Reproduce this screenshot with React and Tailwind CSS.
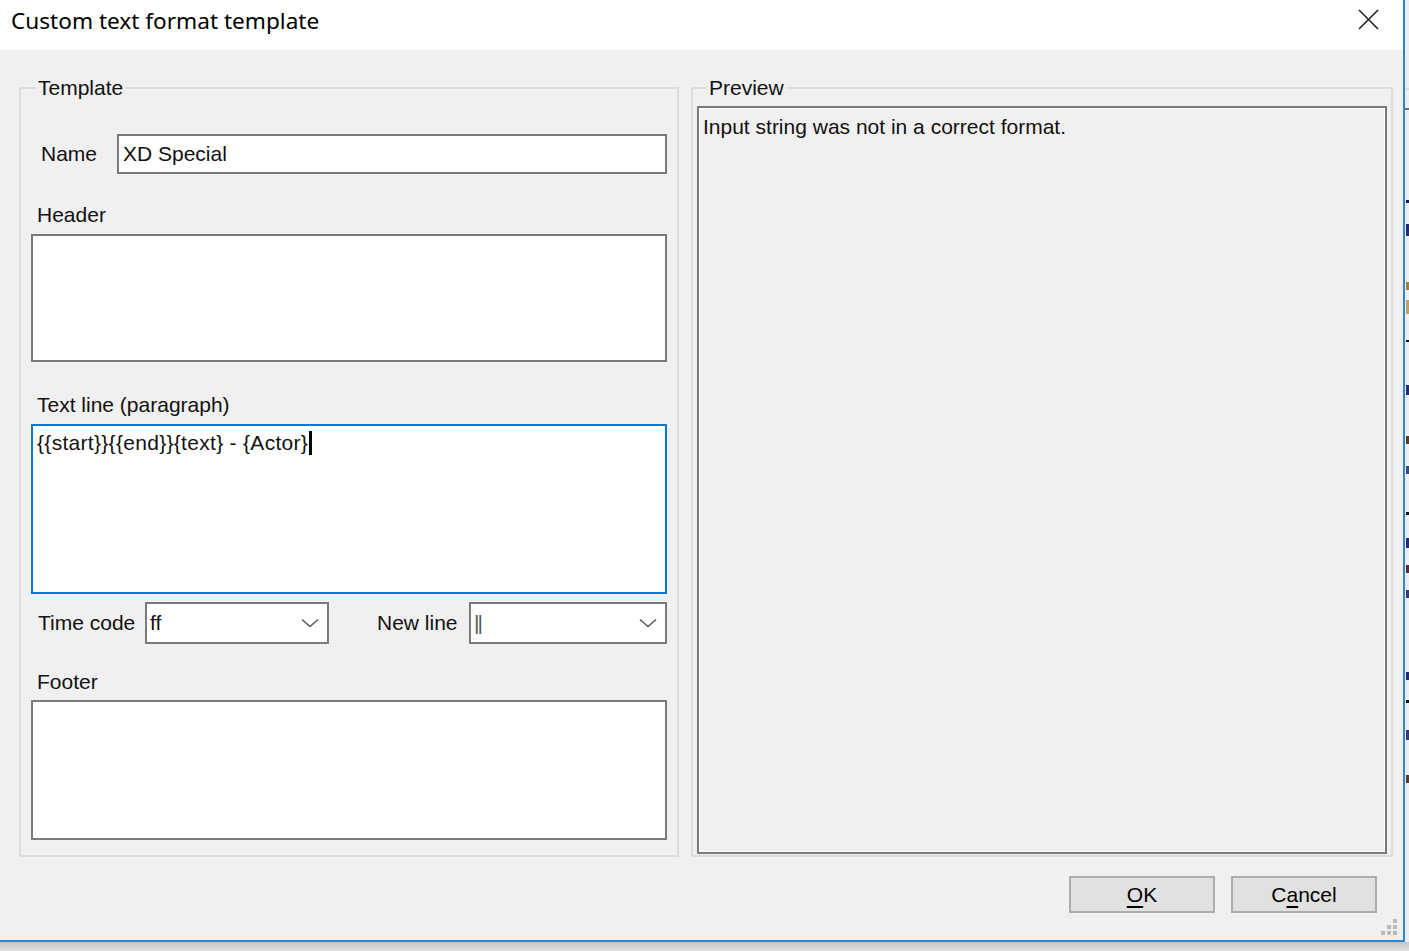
import { useState } from 'react';

const uiFont = { fontFamily: '"Liberation Sans", Arial, sans-serif' };

function Chevron() {
  return (
    <svg width="18" height="10" viewBox="0 0 18 10" className="shrink-0">
      <path d="M1 1.5 L9 8.5 L17 1.5" fill="none" stroke="#5a5a5a" strokeWidth="1.6" />
    </svg>
  );
}

function ComboBox({ value, width }) {
  return (
    <div
      className="h-[42px] bg-white border-2 border-[#7a7a7a] flex items-center pl-[3px] pr-[8px]"
      style={{ width }}
    >
      <span className="flex-1 leading-[24px]">{value}</span>
      <Chevron />
    </div>
  );
}

function GroupBox({ title, className, children, legendOffset }) {
  return (
    <div className={`border-2 border-[#dcdcdc] flex flex-col ${className}`}>
      <span
        className={`block w-fit -mt-[13px] px-[2px] bg-[#f0f0f0] leading-[24px] h-[24px] ${legendOffset}`}
      >
        {title}
      </span>
      {children}
    </div>
  );
}

function TemplateGroup({ name, setName, textLine }) {
  return (
    <GroupBox title="Template" className="w-[660px] h-[770px]" legendOffset="ml-[15px]">
      <div className="flex flex-col pl-[10px] pr-[10px]">
        <div className="mt-[34px] h-[40px] flex items-center">
          <span className="ml-[10px] leading-[24px]">Name</span>
          <input
            value={name}
            onChange={(e) => setName(e.target.value)}
            className="ml-auto w-[550px] h-[40px] bg-white border-2 border-[#7a7a7a] pl-[4px] outline-none"
          />
        </div>

        <span className="mt-[29px] ml-[6px] leading-[24px] h-[24px]">Header</span>
        <div className="mt-[7px] h-[128px] bg-white border-2 border-[#7a7a7a]" />

        <span className="mt-[31px] ml-[6px] leading-[24px] h-[24px]">Text line (paragraph)</span>
        <div className="mt-[7px] h-[170px] bg-white border-2 border-[#0078d7] pl-[4px] pt-[5px]">
          <div className="flex items-center h-[24px]">
            <span className="leading-[24px] tracking-[0.3px]">{textLine}</span>
            <span className="w-[3px] h-[24px] bg-black ml-[1px]" />
          </div>
        </div>

        <div className="mt-[8px] h-[42px] grid grid-cols-[114px_184px_140px_198px] items-center">
          <span className="ml-[7px] leading-[24px]">Time code</span>
          <ComboBox value="ff" width={184} />
          <span className="ml-[48px] leading-[24px]">New line</span>
          <ComboBox value={<span className="text-[#555] tracking-[-2px]">||</span>} width={198} />
        </div>

        <span className="mt-[26px] ml-[6px] leading-[24px] h-[24px]">Footer</span>
        <div className="mt-[6px] h-[140px] bg-white border-2 border-[#7a7a7a]" />
      </div>
    </GroupBox>
  );
}

function PreviewGroup({ message }) {
  return (
    <GroupBox title="Preview" className="w-[702px] h-[770px]" legendOffset="ml-[14px]">
      <div className="mt-[6px] ml-[4px] w-[690px] h-[748px] border-2 border-[#7a7a7a] shadow-[inset_0_0_0_1px_#ffffff] pl-[4px] pt-[3px]">
        <span className="leading-[24px]">{message}</span>
      </div>
    </GroupBox>
  );
}

function DialogButton({ children }) {
  return (
    <button className="w-[146px] h-[37px] bg-[#e1e1e1] border-2 border-[#adadad] leading-[24px] text-black">
      {children}
    </button>
  );
}

function SizeGrip() {
  return (
    <svg width="16" height="16" viewBox="0 0 16 16" className="absolute right-[6px] bottom-[5px]">
      <g fill="#b9b9b9">
        <rect x="12" y="0" width="4" height="4" />
        <rect x="6" y="6" width="4" height="4" />
        <rect x="12" y="6" width="4" height="4" />
        <rect x="0" y="12" width="4" height="4" />
        <rect x="6" y="12" width="4" height="4" />
        <rect x="12" y="12" width="4" height="4" />
      </g>
    </svg>
  );
}

// clipped edge of the window sitting behind the dialog
function BackgroundSliver() {
  const bits = [
    [200, 3, '#1d1d4a'], [224, 12, '#2a2a6a'], [282, 8, '#a08040'], [300, 14, '#c0a060'],
    [340, 2, '#111'], [385, 10, '#2a2a6a'], [436, 8, '#5a3a2a'], [466, 8, '#3a4a6a'],
    [512, 3, '#111'], [538, 10, '#2a2a6a'], [565, 8, '#5a2a3a'], [590, 8, '#3a3a6a'],
    [672, 8, '#2a2a6a'], [700, 3, '#111'], [730, 10, '#3a3a6a'], [775, 8, '#5a3a2a'],
  ];
  return (
    <svg width="4" height="942" viewBox="0 0 4 942" className="shrink-0">
      <rect x="0" y="0" width="4" height="942" fill="#eeeeee" />
      <rect x="0" y="88" width="4" height="2" fill="#dadada" />
      <rect x="0" y="108" width="4" height="2" fill="#6e6e6e" />
      {bits.map(([y, h, c]) => (
        <rect key={y} x="1" y={y} width="3" height={h} fill={c} />
      ))}
    </svg>
  );
}

export default function App() {
  const [name, setName] = useState('XD Special');
  const textLine = '{{start}}{{end}}{text} - {Actor}';

  return (
    <div className="w-[1409px] h-[951px] bg-[#e6e6e6] flex flex-col overflow-hidden" style={uiFont}>
      <div className="flex">
        <div className="w-[1405px] h-[942px] flex flex-col border-r-2 border-b-2 border-[#2b86cc] shrink-0">
          <div className="h-[50px] bg-white flex items-center justify-between pl-[11px] pr-[24px] shrink-0">
            <span
              className="text-[22.6px] text-black -mt-[9px]"
              style={{ fontFamily: '"Noto Sans", "Open Sans", sans-serif' }}
            >
              Custom text format template
            </span>
            <svg width="21" height="21" viewBox="0 0 21 21" className="-mt-[12px]">
              <path d="M1 1 L20 20 M20 1 L1 20" stroke="#1a1a1a" strokeWidth="1.5" />
            </svg>
          </div>

          <div className="flex-1 bg-[#f0f0f0] relative flex flex-col text-[21px] text-[#111]">
            <div className="flex gap-[12px] pl-[19px] mt-[37px]">
              <TemplateGroup name={name} setName={setName} textLine={textLine} />
              <PreviewGroup message="Input string was not in a correct format." />
            </div>

            <div className="flex justify-end gap-[16px] mt-[19px] pr-[26px]">
              <DialogButton>
                <span className="underline underline-offset-[4px]">O</span>K
              </DialogButton>
              <DialogButton>
                C<span className="underline underline-offset-[4px]">a</span>ncel
              </DialogButton>
            </div>

            <SizeGrip />
          </div>
        </div>
        <BackgroundSliver />
      </div>
      <div className="flex-1 bg-gradient-to-b from-[#c4c4c4] to-[#e2e2e2]" />
    </div>
  );
}
